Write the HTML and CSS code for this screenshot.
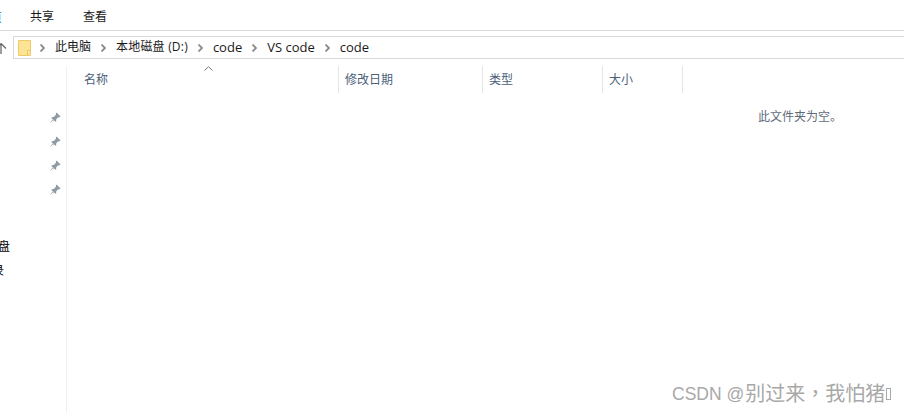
FILE: index.html
```html
<!DOCTYPE html>
<html lang="zh-CN">
<head>
    <meta charset="UTF-8">
    <meta name="viewport" content="width=device-width, initial-scale=1.0">
    <title>code</title>
    <link rel="stylesheet" href="styles.css">
</head>
<body>

    <!-- Ribbon tabs -->
    <div class="ribbon">
        <span class="tab-cut">页</span>
        <span class="tab tab-share">共享</span>
        <span class="tab tab-view">查看</span>
    </div>

    <!-- Address bar -->
    <div class="nav">
        <div class="up">
            <svg width="13" height="12" viewBox="0 0 13 12"><path d="M1 1.500V12M1 1.500L-4 6.500M1 1.500L6 6.500" fill="none" stroke="#6b6b6b" stroke-width="1.300"/></svg>
        </div>
        <div class="address">
            <svg class="folder" width="13" height="16" viewBox="0 0 13 16">
                <path d="M.5 .5H12.500V15.500H.5Z" fill="#fde394" stroke="#ecca6a"/>
                <path d="M9.500 15V10.500H12" fill="#fff3c8" stroke="#e8c25e"/>
            </svg>
            <svg class="chev chev-first" width="5" height="8" viewBox="0 0 5 8"><path d="M.5 .5L4 4L.5 7.500" fill="none" stroke="#8a8a8a" stroke-width="1.800"/></svg>
            <span class="crumb">此电脑</span>
            <svg class="chev" width="5" height="8" viewBox="0 0 5 8"><path d="M.5 .5L4 4L.5 7.500" fill="none" stroke="#8a8a8a" stroke-width="1.800"/></svg>
            <span class="crumb crumb-drive">本地磁盘 (D:)</span>
            <svg class="chev" width="5" height="8" viewBox="0 0 5 8"><path d="M.5 .5L4 4L.5 7.500" fill="none" stroke="#8a8a8a" stroke-width="1.800"/></svg>
            <span class="crumb crumb-en">code</span>
            <svg class="chev" width="5" height="8" viewBox="0 0 5 8"><path d="M.5 .5L4 4L.5 7.500" fill="none" stroke="#8a8a8a" stroke-width="1.800"/></svg>
            <span class="crumb crumb-en">VS code</span>
            <svg class="chev" width="5" height="8" viewBox="0 0 5 8"><path d="M.5 .5L4 4L.5 7.500" fill="none" stroke="#8a8a8a" stroke-width="1.800"/></svg>
            <span class="crumb crumb-en">code</span>
        </div>
    </div>

    <div class="content">
        <!-- Quick access, cut off at the left -->
        <div class="sidebar">
            <div class="side-row"><svg class="pin" width="12" height="12" viewBox="0 0 12 12"><path d="M7.500 .5L11.500 4.500L10 5.500L9 5.200L7.200 7.500L7.200 9.200L6.200 9.800L2.500 6L3 5L4.800 5L7 2.800L6.800 1.800ZM4 7.300L.5 11.500L4.700 8Z" fill="#8d99a3"/></svg></div>
            <div class="side-row"><svg class="pin" width="12" height="12" viewBox="0 0 12 12"><path d="M7.500 .5L11.500 4.500L10 5.500L9 5.200L7.200 7.500L7.200 9.200L6.200 9.800L2.500 6L3 5L4.800 5L7 2.800L6.800 1.800ZM4 7.300L.5 11.500L4.700 8Z" fill="#8d99a3"/></svg></div>
            <div class="side-row"><svg class="pin" width="12" height="12" viewBox="0 0 12 12"><path d="M7.500 .5L11.500 4.500L10 5.500L9 5.200L7.200 7.500L7.200 9.200L6.200 9.800L2.500 6L3 5L4.800 5L7 2.800L6.800 1.800ZM4 7.300L.5 11.500L4.700 8Z" fill="#8d99a3"/></svg></div>
            <div class="side-row"><svg class="pin" width="12" height="12" viewBox="0 0 12 12"><path d="M7.500 .5L11.500 4.500L10 5.500L9 5.200L7.200 7.500L7.200 9.200L6.200 9.800L2.500 6L3 5L4.800 5L7 2.800L6.800 1.800ZM4 7.300L.5 11.500L4.700 8Z" fill="#8d99a3"/></svg></div>
            <div class="side-gap"></div>
            <div class="side-row side-label"><span class="label-disk">盘</span></div>
            <div class="side-row side-label"><span class="label-rec">录</span></div>
        </div>

        <div class="files">
            <div class="columns">
                <div class="col col-name">名称
                    <svg class="sort" width="9" height="5" viewBox="0 0 9 5"><path d="M.5 4.500L4.500 .7L8.500 4.500" fill="none" stroke="#7a7a7a"/></svg>
                </div>
                <div class="col col-date">修改日期</div>
                <div class="col col-type">类型</div>
                <div class="col col-size">大小</div>
            </div>
            <p class="empty">此文件夹为空。</p>
        </div>
    </div>

    <div class="watermark" lang="zh-TW"><span class="wm-latin">CSDN @</span>别过来，我怕猪<span class="tofu"></span></div>

</body>
</html>
```

FILE: styles.css
```css
html, body {
    height: 100%;
}
body {
    margin: 0;
    display: flex;
    flex-direction: column;
    overflow: hidden;
    position: relative;
    background-color: #fff;
    font-family: "Open Sans", "Noto Sans CJK SC", sans-serif;
    font-size: 12px;
    color: #1a1a1a;
}
svg {
    display: block;
    flex: none;
}

/* ribbon */
.ribbon {
    height: 31px;
    flex: none;
    display: flex;
    align-items: center;
    padding-top: 4px;
    box-sizing: border-box;
    border-bottom: 1px solid #d9d9d9;
    overflow: hidden;
}
.tab-cut {
    width: 2px;
    overflow: hidden;
    color: #2a7fc9;
    direction: rtl;
    white-space: nowrap;
}
.tab {
    line-height: 16px;
}
.tab-share {
    margin-left: 28px;
}
.tab-view {
    margin-left: 29px;
}

/* address bar */
.nav {
    flex: none;
    display: flex;
    align-items: center;
    height: 23px;
    margin-top: 5px;
}
.up {
    width: 13px;
    flex: none;
    overflow: hidden;
}
.address {
    flex: 1;
    height: 23px;
    box-sizing: border-box;
    display: flex;
    align-items: center;
    border: 1px solid #d9d9d9;
    border-right: none;
    padding-left: 4px;
}
.chev {
    margin: 0 10px;
}
.chev-first {
    margin: 0 10px 0 9px;
}
.crumb {
    white-space: nowrap;
    line-height: 16px;
    margin-bottom: 1px;
}
.crumb-en {
    font-size: 13px;
    margin-bottom: 2px;
}
.crumb-drive {
    letter-spacing: .2px;
}

/* main area */
.content {
    flex: 1;
    display: flex;
    margin-top: 7px;
    min-height: 0;
}
.sidebar {
    width: 67px;
    flex: none;
    box-sizing: border-box;
    padding-top: 40px;
    border-right: 1px solid #f0f0f0;
    overflow: hidden;
}
.side-row {
    height: 24px;
    display: flex;
    align-items: center;
    justify-content: flex-end;
    padding-right: 5px;
}
.side-gap {
    height: 32px;
}
.side-label {
    justify-content: flex-start;
    padding-right: 0;
    color: #000;
}
.label-disk {
    margin-left: -2px;
}
.label-rec {
    margin-left: -8px;
}

/* file list */
.files {
    flex: 1;
    min-width: 0;
}
.columns {
    display: flex;
    height: 27px;
}
.col {
    box-sizing: border-box;
    display: flex;
    align-items: center;
    padding-left: 6px;
    padding-bottom: 2px;
    border-right: 1px solid #e5e5e5;
    color: #4c607a;
}
.col-name {
    width: 272px;
    padding-left: 17px;
    position: relative;
}
.col-date {
    width: 144px;
}
.col-type {
    width: 120px;
}
.col-size {
    width: 80px;
}
.sort {
    position: absolute;
    left: 137px;
    top: 0;
}
.empty {
    margin: 16px 0 0;
    padding-left: 691px;
    line-height: 16px;
    color: #5f6b7a;
    white-space: nowrap;
}

/* watermark */
.watermark {
    position: absolute;
    left: 672px;
    top: 382px;
    font-family: "Liberation Sans", "Noto Sans CJK TC", sans-serif;
    font-size: 20px;
    line-height: 24px;
    color: #a8a8a8;
    white-space: nowrap;
    display: flex;
    align-items: center;
}
.wm-latin {
    font-size: 17.500px;
    margin-right: 1px;
    white-space: pre;
}
.tofu {
    width: 5px;
    height: 12px;
    margin-left: 1px;
    border: 1px solid #a8a8a8;
    box-sizing: border-box;
}
```
